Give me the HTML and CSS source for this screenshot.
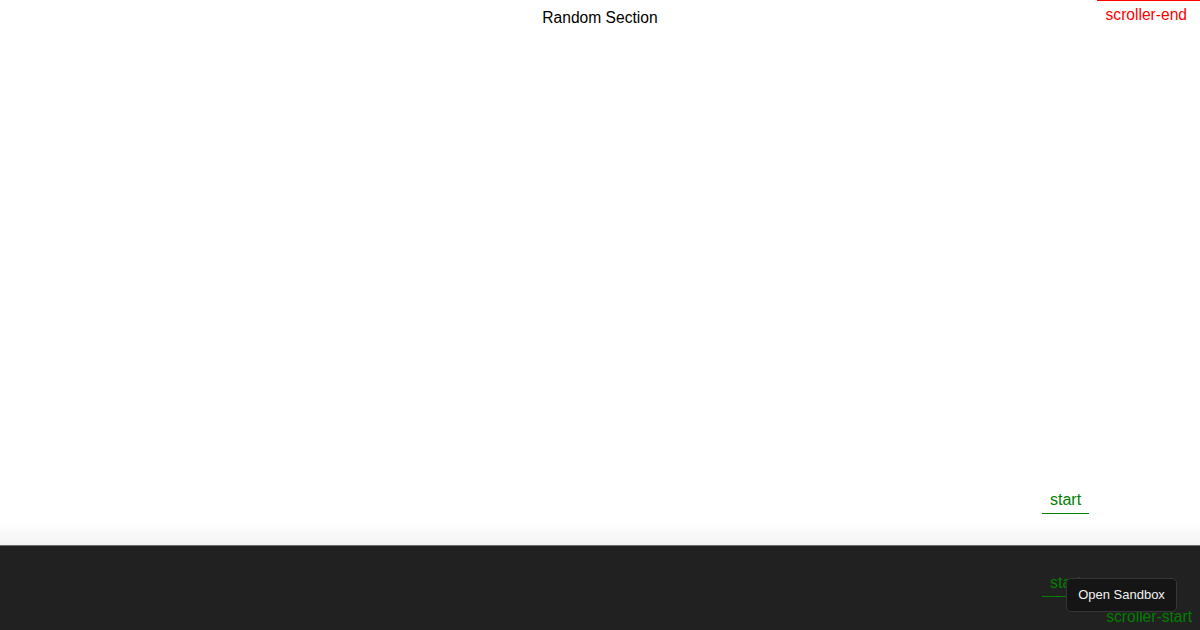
FILE: index.html
```html
<!DOCTYPE html>
<html>
<head>
<meta charset="utf-8">
<link rel="stylesheet" href="styles.css">
</head>
<body>
<div class="page">
  <section class="random">
    <h2 class="title">Random Section</h2>
  </section>
  <section class="dark"></section>
</div>
<div class="marker marker-start marker-a">start</div>
<div class="marker marker-start marker-b">start</div>
<div class="marker scroller-end">scroller-end</div>
<div class="marker scroller-start">scroller-start</div>
<button class="sandbox">Open Sandbox</button>
</body>
</html>
```
FILE: styles.css
```css
html, body {
  margin: 0;
  padding: 0;
  height: 630px;
  overflow: hidden;
  font-family: "Liberation Sans", Arial, sans-serif;
  background: #ffffff;
}
.page {
  display: flex;
  flex-direction: column;
  height: 630px;
}
.random {
  height: 545px;
  background: linear-gradient(to bottom, #ffffff 0, #ffffff 522px, #f3f3f3 545px);
  display: flex;
  justify-content: center;
}
.title {
  margin: 0;
  padding-top: 9px;
  font-size: 15.6px;
  line-height: 18px;
  font-weight: normal;
  color: #000;
}
.dark {
  flex: 1;
  background: #212121;
  border-top: 1px solid #6a6a6a;
}
.marker {
  position: absolute;
  font-size: 15.6px;
  line-height: 18px;
  padding: 4px 8px;
  white-space: nowrap;
}
.marker-start {
  color: #008000;
  border-bottom: 1px solid #008000;
  left: 1042px;
  font-size: 16px;
}
.marker-a { top: 487px; }
.marker-b { top: 570px; }
.scroller-end {
  top: 0;
  right: 0;
  color: #ff0000;
  border-top: 1px solid #ff0000;
  padding: 5px 13px 3px 9px;
  height: 18px;
}
.scroller-start {
  top: 604px;
  right: 0;
  color: #008000;
  border-bottom: 1px solid #008000;
}
.sandbox {
  position: absolute;
  left: 1066px;
  top: 578px;
  width: 111px;
  height: 34px;
  background: #151515;
  border: 1px solid #363636;
  border-radius: 5px;
  color: #f2f2f2;
  font-family: "Liberation Sans", Arial, sans-serif;
  font-size: 13px;
  line-height: 31px;
  padding: 0 0 1px;
  box-sizing: border-box;
}
```
